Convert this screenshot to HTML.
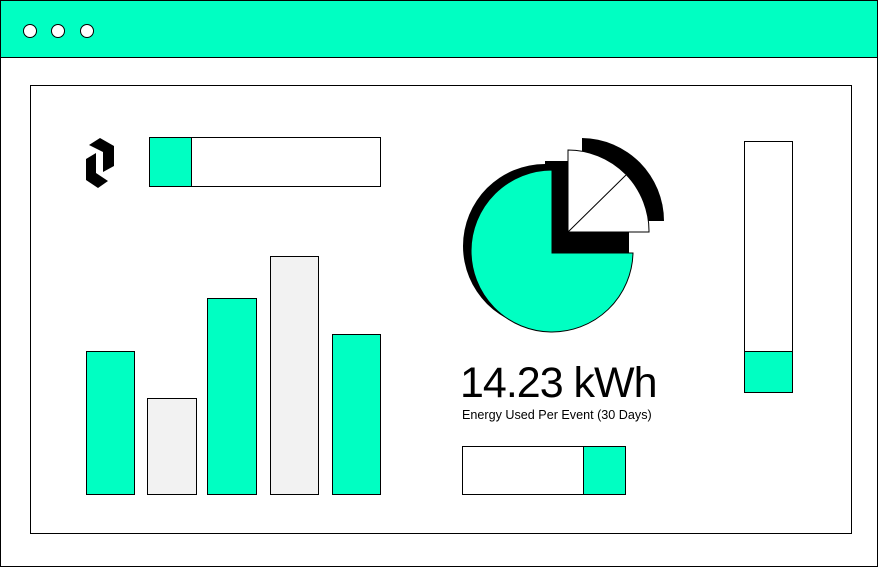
<!DOCTYPE html>
<html><head><style>
body{margin:0;width:878px;height:567px;background:#fff;position:relative;overflow:hidden;font-family:"Liberation Sans",sans-serif}
.a{position:absolute;box-sizing:border-box;border:1px solid #000}
.g{background:#00FFC2}.s{background:#f2f2f2}
</style></head><body>
<div class="a g" style="left:0;top:0;width:878px;height:58px"></div>
<div class="a" style="left:0;top:57px;width:878px;height:510px;border-top:none"></div>
<div class="a" style="left:23px;top:24px;width:14px;height:14px;border-radius:50%;background:#fff"></div>
<div class="a" style="left:51px;top:24px;width:14px;height:14px;border-radius:50%;background:#fff"></div>
<div class="a" style="left:80px;top:24px;width:14px;height:14px;border-radius:50%;background:#fff"></div>
<div class="a" style="left:30px;top:85px;width:822px;height:449px"></div>
<div class="a" style="left:149px;top:137px;width:232px;height:50px"></div>
<div class="a g" style="left:149px;top:137px;width:43px;height:50px"></div>
<div class="a g" style="left:86px;top:351px;width:49px;height:144px"></div>
<div class="a s" style="left:147px;top:398px;width:50px;height:97px"></div>
<div class="a g" style="left:207px;top:298px;width:50px;height:197px"></div>
<div class="a s" style="left:270px;top:256px;width:49px;height:239px"></div>
<div class="a g" style="left:332px;top:334px;width:49px;height:161px"></div>
<div class="a" style="left:744px;top:141px;width:49px;height:252px"></div>
<div class="a g" style="left:744px;top:351px;width:49px;height:42px"></div>
<div class="a" style="left:462px;top:446px;width:164px;height:49px"></div>
<div class="a g" style="left:583px;top:446px;width:43px;height:49px"></div>
<svg style="position:absolute;left:0;top:0" width="878" height="567">
<path d="M86 159 L96 153 L96 173 L108 181 L98 188 L86 180 Z M89 145 L100 138 L114 146 L114 166 L103 172 L103 152 Z" fill="#000"/>
<path d="M582 221 L582 138 A83 83 0 0 1 664 221 Z" fill="#000"/>
<path d="M545 246 L545 164 A82 82 0 1 0 627 246 Z" fill="#000"/>
<rect x="545" y="161" width="24" height="92" fill="#000"/>
<rect x="545" y="232" width="84" height="21" fill="#000"/>
<path d="M552 253 L552 170 A81 81 0 1 0 633 253 Z" fill="#00FFC2" stroke="#000" stroke-width="1"/>
<path d="M568 232 L568 150 A81 81 0 0 1 649 232 Z" fill="#fff" stroke="#000" stroke-width="1"/>
<line x1="568" y1="232" x2="626" y2="175" stroke="#000" stroke-width="1"/>
</svg>
<div style="position:absolute;left:460px;top:359px;font-size:43px;line-height:48px;letter-spacing:-1px">14.23 kWh</div>
<div style="position:absolute;left:462px;top:407px;font-size:12.6px;line-height:16px">Energy Used Per Event (30 Days)</div>
</body></html>
